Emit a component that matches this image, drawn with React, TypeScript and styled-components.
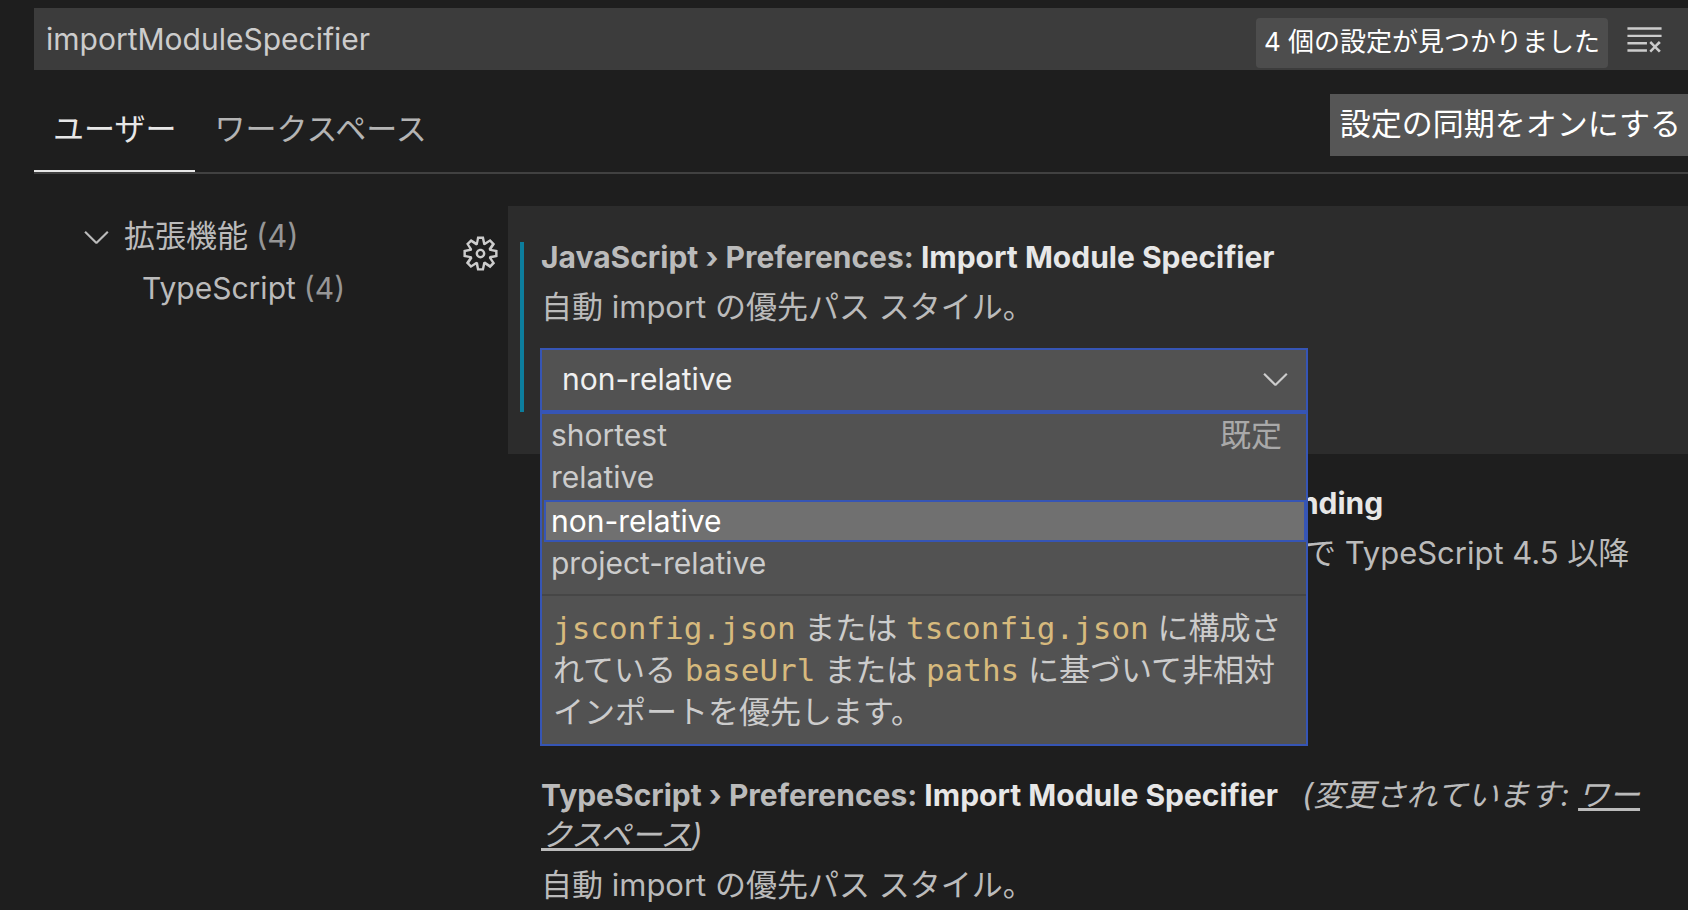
import React from "react";
import styled, { createGlobalStyle, css } from "styled-components";

const GlobalStyle = createGlobalStyle`
  *, *::before, *::after { box-sizing: border-box; }
  html, body { margin: 0; background: #1e1e1e; }
  body, button, input, select {
    font-family: Inter, "Noto Sans CJK JP", sans-serif;
    font-size: 30px;
    line-height: 42px;
  }
`;

const Page = styled.main`
  height: 100vh;
  overflow: hidden;
  padding: 8px 0 0 34px;
  background: #1e1e1e;
  color: #bbbbbb;
`;

const SearchBar = styled.div`
  display: flex;
  align-items: center;
  height: 62px;
  padding: 0 24px 0 12px;
  background: #3c3c3c;
`;

const SearchInput = styled.input`
  flex: 1;
  min-width: 0;
  padding: 0;
  border: 0;
  outline: 0;
  background: transparent;
  color: #cccccc;
`;

const CountBadge = styled.output`
  align-self: flex-end;
  height: 50px;
  margin: 0 17px 2px 0;
  padding: 3px 8px;
  border-radius: 4px;
  background: #4d4d4d;
  color: #ffffff;
  font-size: 26px;
`;

const IconButton = styled.button`
  display: flex;
  padding: 0;
  border: 0;
  background: transparent;
  color: #cccccc;
`;

const Header = styled.header`
  display: flex;
  justify-content: space-between;
  align-items: flex-end;
  height: 104px;
  border-bottom: 2px solid #414141;
`;

const Tabs = styled.div`
  display: flex;
  align-self: flex-end;
`;

const Tab = styled.button<{ $active?: boolean }>`
  height: 82px;
  padding: 0 19px 2px;
  border: 0;
  border-bottom: 2px solid ${(p) => (p.$active ? "#e7e7e7" : "transparent")};
  background: transparent;
  color: ${(p) => (p.$active ? "#e7e7e7" : "#b4b4b4")};
  font-size: 31px;
`;

const SyncButton = styled.button`
  height: 62px;
  margin-bottom: 16px;
  padding: 0 7px 2px 10px;
  border: 0;
  background: #565656;
  color: #ffffff;
  font-size: 31px;
`;

const Body = styled.div`
  display: flex;
  padding-top: 32px;
`;

const Toc = styled.nav`
  flex: 0 0 427px;
  padding: 4px 0 0 43px;
`;

const TocItem = styled.a<{ $nested?: boolean }>`
  display: flex;
  align-items: center;
  gap: 8px;
  height: 52px;
  padding-left: ${(p) => (p.$nested ? "65px" : "0")};
  color: #bbbbbb;
  font-size: ${(p) => (p.$nested ? "30px" : "31px")};
  text-decoration: none;
`;

const TocCount = styled.span`
  color: #969696;
`;

const Settings = styled.section`
  flex: 1;
  min-width: 0;
`;

const Setting = styled.article`
  display: grid;
  grid-template-columns: 47px minmax(0, 1fr);
`;

const GearCell = styled.div`
  padding-top: 28px;
`;

const SettingBox = styled.div<{ $focused?: boolean; $covered?: boolean }>`
  min-height: ${(p) => (p.$covered ? "292px" : "0")};
  padding: 31px 40px 40px 33px;
  ${(p) =>
    p.$focused &&
    css`
      background: #2c2c2c;
      box-shadow: 0 2px #2c2c2c;
    `}
`;

const SettingContent = styled.div<{ $modified?: boolean }>`
  position: relative;
  ${(p) =>
    p.$modified &&
    css`
      &::before {
        content: "";
        position: absolute;
        top: 5px;
        bottom: 0;
        left: -21px;
        width: 4px;
        background: #0c7d9d;
      }
    `}
`;

const Title = styled.h2`
  margin: 0;
  font-size: 30px;
  line-height: 40px;
  font-weight: 700;
`;

const TitleName = styled.span`
  color: #e7e7e7;
`;

const Scope = styled.em`
  margin-left: 24px;
  font-size: 31px;
  line-height: 1;
  font-weight: 400;
`;

const ScopeLink = styled.a`
  color: inherit;
  text-decoration: underline;
`;

const Description = styled.p`
  margin: 9px 0 0;
  font-size: 31px;
`;

const SelectField = styled.div`
  position: relative;
  width: 768px;
  max-width: 100%;
  margin: 20px 0 0 -1px;
`;

const SelectBox = styled.select`
  display: block;
  appearance: none;
  width: 100%;
  height: 64px;
  padding: 0 60px 2px 20px;
  border: 2px solid #3655b5;
  border-radius: 0;
  outline: 0;
  background: #525252;
  color: #f0f0f0;
`;

const SelectArrow = styled.span`
  position: absolute;
  top: 11px;
  right: 13px;
  display: flex;
  color: #cccccc;
  pointer-events: none;
`;

const Dropdown = styled.div`
  position: absolute;
  z-index: 1;
  top: 100%;
  left: 0;
  right: 0;
  border: 2px solid #3655b5;
  background: #525252;
  color: #cccccc;
`;

const OptionList = styled.ul`
  margin: 0;
  padding: 0 0 10px 2px;
  list-style: none;
  border-bottom: 2px solid #464646;
`;

const OptionItem = styled.li<{ $selected?: boolean }>`
  display: flex;
  justify-content: space-between;
  height: 42px;
  padding: 0 24px 0 7px;
  ${(p) =>
    p.$selected &&
    css`
      margin-top: 2px;
      background: #707070;
      color: #ffffff;
      outline: 2px solid #3655b5;
      outline-offset: -2px;
    `}
`;

const OptionTag = styled.span`
  color: #a9a9a9;
  font-size: 31px;
`;

const OptionDetail = styled.p`
  margin: 0;
  padding: 11px 20px 11px 11px;
  font-size: 31px;
`;

const Code = styled.code`
  font-family: "DejaVu Sans Mono", monospace;
  font-size: 31px;
  color: #d7ba7d;
`;

const Svg = styled.svg`
  display: block;
  width: 39px;
  height: 39px;
  fill: currentColor;
`;

const Icon = ({ d }: { d: string }) => (
  <Svg viewBox="0 0 16 16" aria-hidden="true">
    <path fillRule="evenodd" clipRule="evenodd" d={d} />
  </Svg>
);

const chevronDown =
  "M7.976 10.072l4.357-4.357.62.618L8.284 11h-.618L3 6.333l.619-.618 4.357 4.357z";
const clearAll =
  "M10 12.6l.7.7 1.6-1.6 1.6 1.6.8-.7L13 11l1.7-1.6-.8-.8-1.6 1.7-1.6-1.7-.7.8 1.6 1.6-1.6 1.6zM1 4h14V3H1v1zm0 3h14V6H1v1zm8 2.5V9H1v1h8v-.5zM9 13v-1H1v1h8z";
const gear =
  "M9.1 4.4L8.6 2H7.4l-.5 2.4-.7.3-2-1.3-.9.8 1.3 2-.2.7-2.4.5v1.2l2.4.5.3.8-1.3 2 .8.8 2-1.3.8.3.4 2.3h1.2l.5-2.4.8-.3 2 1.3.8-.8-1.3-2 .3-.8 2.3-.4V7.4l-2.4-.5-.3-.8 1.3-2-.8-.8-2 1.3-.7-.2zM9.4 1l.5 2.4L12 2.1l2 2-1.4 2.1 2.4.4v2.8l-2.4.5L14 12l-2 2-2.1-1.4-.5 2.4H6.6l-.5-2.4L4 13.9l-2-2 1.4-2.1L1 9.4V6.6l2.4-.5L2.1 4l2-2 2.1 1.4.4-2.4h2.8zm.6 7c0 1.1-.9 2-2 2s-2-.9-2-2 .9-2 2-2 2 .9 2 2zM8 9c.6 0 1-.4 1-1s-.4-1-1-1-1 .4-1 1 .4 1 1 1z";

const options = ["shortest", "relative", "non-relative", "project-relative"];

export default function App() {
  return (
    <>
      <GlobalStyle />
      <Page>
        <SearchBar>
          <SearchInput aria-label="設定の検索" defaultValue="importModuleSpecifier" />
          <CountBadge>4 個の設定が見つかりました</CountBadge>
          <IconButton aria-label="クリア">
            <Icon d={clearAll} />
          </IconButton>
        </SearchBar>
        <Header>
          <Tabs role="tablist">
            <Tab role="tab" aria-selected="true" $active>ユーザー</Tab>
            <Tab role="tab" aria-selected="false">ワークスペース</Tab>
          </Tabs>
          <SyncButton>設定の同期をオンにする</SyncButton>
        </Header>
        <Body>
          <Toc>
            <TocItem href="#extensions">
              <Icon d={chevronDown} />
              <span>拡張機能</span>
              <TocCount>(4)</TocCount>
            </TocItem>
            <TocItem href="#typescript" $nested>
              <span>TypeScript</span>
              <TocCount>(4)</TocCount>
            </TocItem>
          </Toc>
          <Settings>
            <Setting>
              <GearCell>
                <IconButton aria-label="その他の操作">
                  <Icon d={gear} />
                </IconButton>
              </GearCell>
              <SettingBox $focused>
                <SettingContent $modified>
                  <Title id="js-specifier">
                    JavaScript › Preferences: <TitleName>Import Module Specifier</TitleName>
                  </Title>
                  <Description>自動 import の優先パス スタイル。</Description>
                  <SelectField>
                    <SelectBox aria-labelledby="js-specifier" defaultValue="non-relative">
                      {options.map((o) => (
                        <option key={o}>{o}</option>
                      ))}
                    </SelectBox>
                    <SelectArrow>
                      <Icon d={chevronDown} />
                    </SelectArrow>
                    <Dropdown>
                      <OptionList role="listbox" aria-labelledby="js-specifier">
                        {options.map((o) => (
                          <OptionItem
                            key={o}
                            role="option"
                            aria-selected={o === "non-relative"}
                            $selected={o === "non-relative"}
                          >
                            <span>{o}</span>
                            {o === "shortest" && <OptionTag>既定</OptionTag>}
                          </OptionItem>
                        ))}
                      </OptionList>
                      <OptionDetail>
                        <Code>jsconfig.json</Code> または <Code>tsconfig.json</Code> に構成されている{" "}
                        <Code>baseUrl</Code> または <Code>paths</Code> に基づいて非相対インポートを優先します。
                      </OptionDetail>
                    </Dropdown>
                  </SelectField>
                </SettingContent>
              </SettingBox>
            </Setting>
            <Setting>
              <GearCell />
              <SettingBox $covered>
                <SettingContent>
                  <Title>
                    JavaScript › Preferences: <TitleName>Import Module Specifier Ending</TitleName>
                  </Title>
                  <Description>
                    自動 import の優先パスの終わりです。 ワークスペースで TypeScript 4.5 以降
                  </Description>
                </SettingContent>
              </SettingBox>
            </Setting>
            <Setting>
              <GearCell />
              <SettingBox>
                <SettingContent>
                  <Title>
                    TypeScript › Preferences: <TitleName>Import Module Specifier</TitleName>
                    <Scope>
                      (変更されています: <ScopeLink href="#workspace">ワークスペース</ScopeLink>)
                    </Scope>
                  </Title>
                  <Description>自動 import の優先パス スタイル。</Description>
                </SettingContent>
              </SettingBox>
            </Setting>
          </Settings>
        </Body>
      </Page>
    </>
  );
}
